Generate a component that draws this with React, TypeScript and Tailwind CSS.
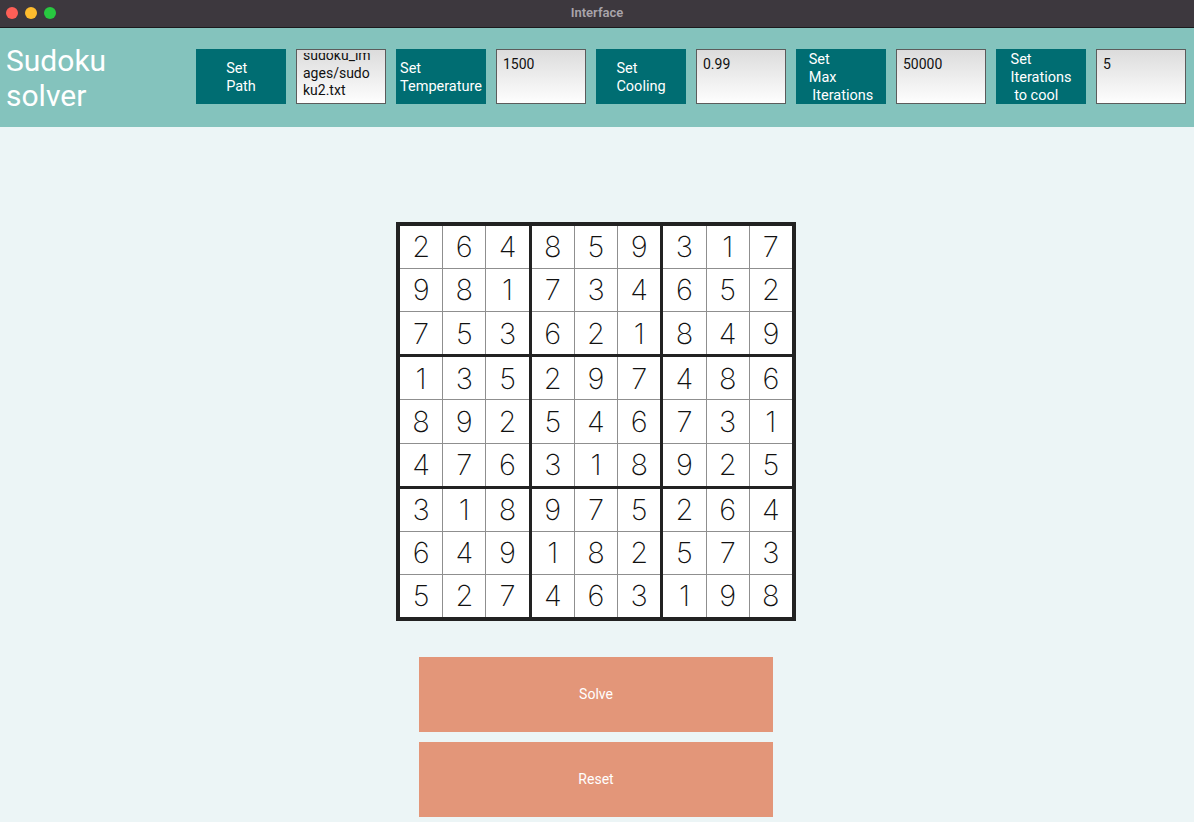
import React from 'react'

const grid = [
  [2, 6, 4, 8, 5, 9, 3, 1, 7],
  [9, 8, 1, 7, 3, 4, 6, 5, 2],
  [7, 5, 3, 6, 2, 1, 8, 4, 9],
  [1, 3, 5, 2, 9, 7, 4, 8, 6],
  [8, 9, 2, 5, 4, 6, 7, 3, 1],
  [4, 7, 6, 3, 1, 8, 9, 2, 5],
  [3, 1, 8, 9, 7, 5, 2, 6, 4],
  [6, 4, 9, 1, 8, 2, 5, 7, 3],
  [5, 2, 7, 4, 6, 3, 1, 9, 8],
]

const settings = [
  { label: 'Set\nPath', value: 'sudoku_images/sudoku2.txt', wrap: true },
  { label: 'Set\nTemperature', value: '1500' },
  { label: 'Set\nCooling', value: '0.99' },
  { label: 'Set\nMax\n Iterations', value: '50000' },
  { label: 'Set\nIterations\n to cool', value: '5' },
]

function SetButton({ label }: { label: string }) {
  return (
    <button className="w-[90px] h-[55px] bg-[#006d72] text-white flex items-center justify-center text-[14.5px] leading-[18px] pt-[2px]">
      <span className="whitespace-pre text-left">{label}</span>
    </button>
  )
}

function Field({ value, wrap }: { value: string; wrap?: boolean }) {
  return (
    <div className="w-[90px] h-[55px] border border-[#5c5c5c] bg-gradient-to-b from-[#dcdcdc] to-[#fefefe] overflow-hidden px-[6px] text-[14px] text-[#111]">
      {wrap ? (
        <div className="h-full pt-[3px]">
          <div className="h-full overflow-hidden">
            <div className="leading-[17.5px] mt-[-6px]">
              sudoku_im<br />ages/sudo<br />ku2.txt
            </div>
          </div>
        </div>
      ) : (
        <div className="leading-[17px] pt-[6px]">{value}</div>
      )}
    </div>
  )
}

function Box({ br, bc }: { br: number; bc: number }) {
  const cells = []
  for (let r = 0; r < 3; r++) {
    for (let c = 0; c < 3; c++) {
      cells.push(
        <div
          key={`${r}-${c}`}
          className="bg-white flex items-center justify-center text-[29px] font-extralight text-[#111]"
          style={{ fontFamily: 'Inter, "DejaVu Sans", sans-serif' }}
        >
          {grid[br * 3 + r][bc * 3 + c]}
        </div>
      )
    }
  }
  return <div className="grid grid-cols-3 grid-rows-3 gap-px bg-[#8f8f8f]">{cells}</div>
}

export default function App() {
  const boxes = []
  for (let br = 0; br < 3; br++) for (let bc = 0; bc < 3; bc++) boxes.push(<Box key={`${br}${bc}`} br={br} bc={bc} />)

  return (
    <div className="w-[1194px] h-[822px] overflow-hidden bg-[#ecf5f6] flex flex-col" style={{ fontFamily: 'Roboto, "Liberation Sans", sans-serif' }}>
      {/* window chrome */}
      <div className="h-[28px] bg-[#3d383e] border-b border-[#1c1a1d] relative flex items-center justify-center shrink-0">
        <div className="absolute left-[6px] top-[7px] flex gap-[7px]">
          <span className="w-[12px] h-[12px] rounded-full bg-[#fe5f57]" />
          <span className="w-[12px] h-[12px] rounded-full bg-[#febc2e]" />
          <span className="w-[12px] h-[12px] rounded-full bg-[#28c840]" />
        </div>
        <span className="text-[13px] font-semibold text-[#a9a4aa] -mt-[1px]">Interface</span>
      </div>

      {/* toolbar */}
      <div className="h-[99px] bg-[#84c3bd] flex items-center shrink-0">
        <div className="w-[196px] pl-[6px] text-white text-[30px] leading-[35px]">
          Sudoku<br />solver
        </div>
        <div className="flex gap-[10px] -mt-[2px]">
          {settings.map((s) => (
            <React.Fragment key={s.label}>
              <SetButton label={s.label} />
              <Field value={s.value} wrap={s.wrap} />
            </React.Fragment>
          ))}
        </div>
      </div>

      {/* board */}
      <div className="flex flex-col items-center pt-[95px] pr-[2px]">
        <div className="w-[400px] h-[399px] border-[4px] border-[#222] bg-[#222] grid grid-cols-3 grid-rows-3 gap-[3px]">
          {boxes}
        </div>
        <div className="mt-[36px] flex flex-col gap-[10px]">
          <button className="w-[354px] h-[75px] bg-[#e39679] text-white text-[14px]">Solve</button>
          <button className="w-[354px] h-[75px] bg-[#e39679] text-white text-[14px]">Reset</button>
        </div>
      </div>
    </div>
  )
}
